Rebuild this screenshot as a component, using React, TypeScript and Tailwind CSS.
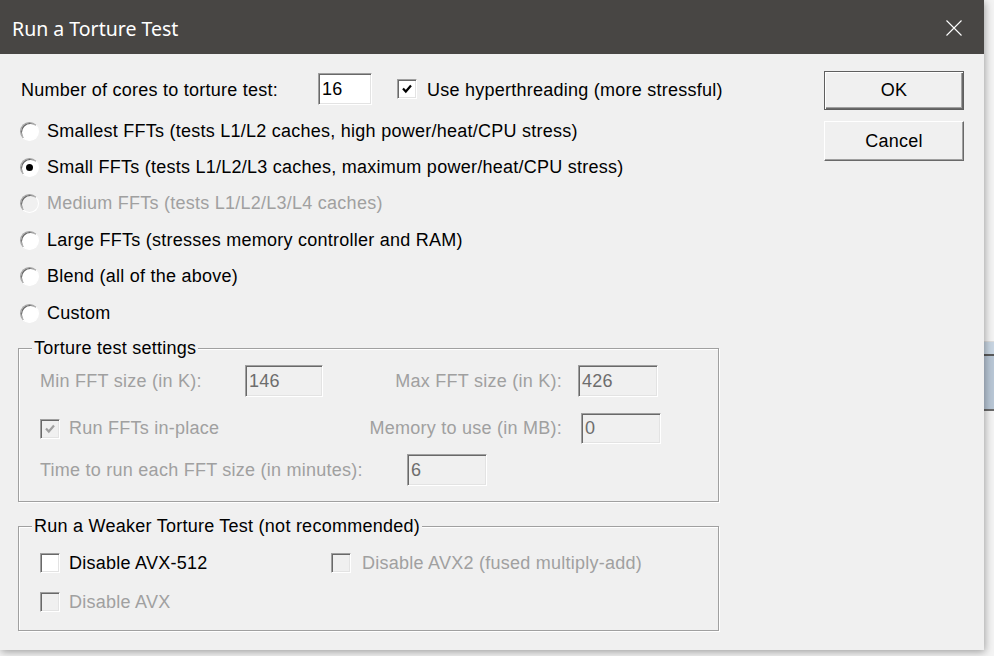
import React from 'react';

const sans = "font-['Liberation_Sans',Arial,sans-serif]";

const Check = ({ checked = false, disabled = false }: { checked?: boolean; disabled?: boolean }) => (
  <div
    className={`w-[20px] h-[20px] shrink-0 flex items-center justify-center border border-t-[#a0a0a0] border-l-[#a0a0a0] border-b-white border-r-white shadow-[inset_1px_1px_0_#696969,inset_-1px_-1px_0_#e3e3e3] ${
      disabled ? 'bg-[#f0f0f0]' : 'bg-white'
    }`}
  >
    {checked && (
      <svg width="12" height="12" viewBox="0 0 12 12">
        <path d="M2 5.5 L4.8 8.5 L10 2.5" fill="none" stroke={disabled ? '#a0a0a0' : '#000'} strokeWidth="2.2" />
      </svg>
    )}
  </div>
);

const Radio = ({ checked = false, disabled = false }: { checked?: boolean; disabled?: boolean }) => (
  <div
    className={`w-[19px] h-[19px] shrink-0 rounded-full flex items-center justify-center border border-t-[#a0a0a0] border-l-[#a0a0a0] border-b-white border-r-white shadow-[inset_1px_1px_0_#696969] ${
      disabled ? 'bg-[#f0f0f0]' : 'bg-white'
    }`}
  >
    {checked && <div className="w-[7px] h-[7px] rounded-full bg-black" />}
  </div>
);

const Edit = ({ value, disabled = false, className }: { value: string; disabled?: boolean; className: string }) => (
  <div
    className={`${className} shrink-0 flex items-center pl-[3px] border border-t-[#a0a0a0] border-l-[#a0a0a0] border-b-white border-r-white shadow-[inset_1px_1px_0_#696969,inset_-1px_-1px_0_#e3e3e3] ${
      disabled ? 'bg-[#f0f0f0] text-[#6d6d6d]' : 'bg-white text-black'
    }`}
  >
    {value}
  </div>
);

const Group = ({ title, className, children }: { title: string; className: string; children: React.ReactNode }) => (
  <div className={`relative w-[701px] border border-[#a0a0a0] shadow-[inset_1px_1px_0_#fff,1px_1px_0_#fff] ${className}`}>
    <span className="absolute left-[13px] top-[-12px] bg-[#f0f0f0] px-[2px] leading-[22px] text-black">{title}</span>
    {children}
  </div>
);

const radios = [
  { label: 'Smallest FFTs (tests L1/L2 caches, high power/heat/CPU stress)' },
  { label: 'Small FFTs (tests L1/L2/L3 caches, maximum power/heat/CPU stress)', checked: true },
  { label: 'Medium FFTs (tests L1/L2/L3/L4 caches)', disabled: true },
  { label: 'Large FFTs (stresses memory controller and RAM)' },
  { label: 'Blend (all of the above)' },
  { label: 'Custom' },
];

export default function App() {
  return (
    <div className={`w-[994px] h-[656px] bg-[#f4f4f4] flex overflow-hidden ${sans} text-[18px] tracking-[0.25px] text-black`}>
      <div className="relative z-10 w-[984px] h-[650px] shrink-0 flex flex-col bg-[#f0f0f0] shadow-[1px_2px_8px_rgba(0,0,0,0.35)]">
        {/* title bar */}
        <div className="h-[54px] shrink-0 bg-[#484644] flex items-center justify-between pl-[12px] pr-[22px]">
          <span className="font-['Noto_Sans',sans-serif] text-[19.5px] tracking-normal text-white pt-[4px]">Run a Torture Test</span>
          <svg width="16" height="16" viewBox="0 0 16 16" className="mt-[1px]">
            <path d="M0.5 0.5 L15.5 15.5 M15.5 0.5 L0.5 15.5" stroke="#fff" strokeWidth="1.1" />
          </svg>
        </div>

        {/* body */}
        <div className="flex flex-1">
          <div className="w-[824px] pl-[18px] flex flex-col">
            <div className="mt-[19px] h-[32px] flex items-center pl-[3px]">
              <span className="w-[297px] pt-[3px]">Number of cores to torture test:</span>
              <Edit value="16" className="w-[54px] h-[32px]" />
              <div className="ml-[25px]">
                <Check checked />
              </div>
              <span className="ml-[10px] pt-[2px]">Use hyperthreading (more stressful)</span>
            </div>

            <div className="mt-[8px] flex flex-col">
              {radios.map((r) => (
                <div key={r.label} className="h-[36.4px] flex items-center pl-[2px]">
                  <Radio checked={r.checked} disabled={r.disabled} />
                  <span className={`ml-[8px] ${r.disabled ? 'text-[#a0a0a0]' : ''}`}>{r.label}</span>
                </div>
              ))}
            </div>

            <Group title="Torture test settings" className="mt-[17px] h-[154px] pt-[16px] text-[#a0a0a0]">
              <div className="h-[32px] flex items-center pl-[21px]">
                <span className="w-[205px]">Min FFT size (in K):</span>
                <Edit value="146" disabled className="w-[78px] h-[32px]" />
                <span className="w-[255px] text-right pr-[16px]">Max FFT size (in K):</span>
                <Edit value="426" disabled className="w-[80px] h-[32px]" />
              </div>
              <div className="mt-[16px] h-[31px] flex items-center pl-[21px]">
                <div className="w-[541px] flex items-center">
                  <Check checked disabled />
                  <span className="ml-[9px]">Run FFTs in-place</span>
                  <span className="ml-auto pr-[19px]">Memory to use (in MB):</span>
                </div>
                <Edit value="0" disabled className="w-[80px] h-[31px]" />
              </div>
              <div className="mt-[10px] h-[32px] flex items-center pl-[21px]">
                <span className="w-[367px]">Time to run each FFT size (in minutes):</span>
                <Edit value="6" disabled className="w-[80px] h-[32px]" />
              </div>
            </Group>

            <Group title="Run a Weaker Torture Test (not recommended)" className="mt-[24px] h-[105px] pt-[26px]">
              <div className="h-[20px] flex items-center pl-[21px]">
                <div className="w-[291px] flex items-center">
                  <Check />
                  <span className="ml-[9px]">Disable AVX-512</span>
                </div>
                <Check disabled />
                <span className="ml-[11px] text-[#a0a0a0]">Disable AVX2 (fused multiply-add)</span>
              </div>
              <div className="mt-[19px] h-[20px] flex items-center pl-[21px]">
                <Check disabled />
                <span className="ml-[9px] text-[#a0a0a0]">Disable AVX</span>
              </div>
            </Group>
          </div>

          <div className="pt-[17px] flex flex-col">
            <button className="w-[140px] h-[39px] bg-[#f0f0f0] border border-[#5f5f5f] shadow-[inset_1px_1px_0_#fff,inset_-1px_-1px_0_#696969,inset_-2px_-2px_0_#a0a0a0]">
              OK
            </button>
            <button className="mt-[11px] w-[140px] h-[40px] bg-[#f0f0f0] border border-t-white border-l-white border-b-[#696969] border-r-[#696969] shadow-[inset_-1px_-1px_0_#a0a0a0]">
              Cancel
            </button>
          </div>
        </div>
      </div>

      {/* window behind */}
      <div className="flex-1 flex flex-col">
        <div className="mt-[341px] h-[13px] bg-[#c8d5e2] border-t border-[#dcdcdc]" />
        <div className="h-[2px] bg-[#5a5a5a]" />
        <div className="h-[53px] bg-[#b9c7d6]" />
        <div className="h-[2px] bg-[#6a6a6a]" />
      </div>
    </div>
  );
}
